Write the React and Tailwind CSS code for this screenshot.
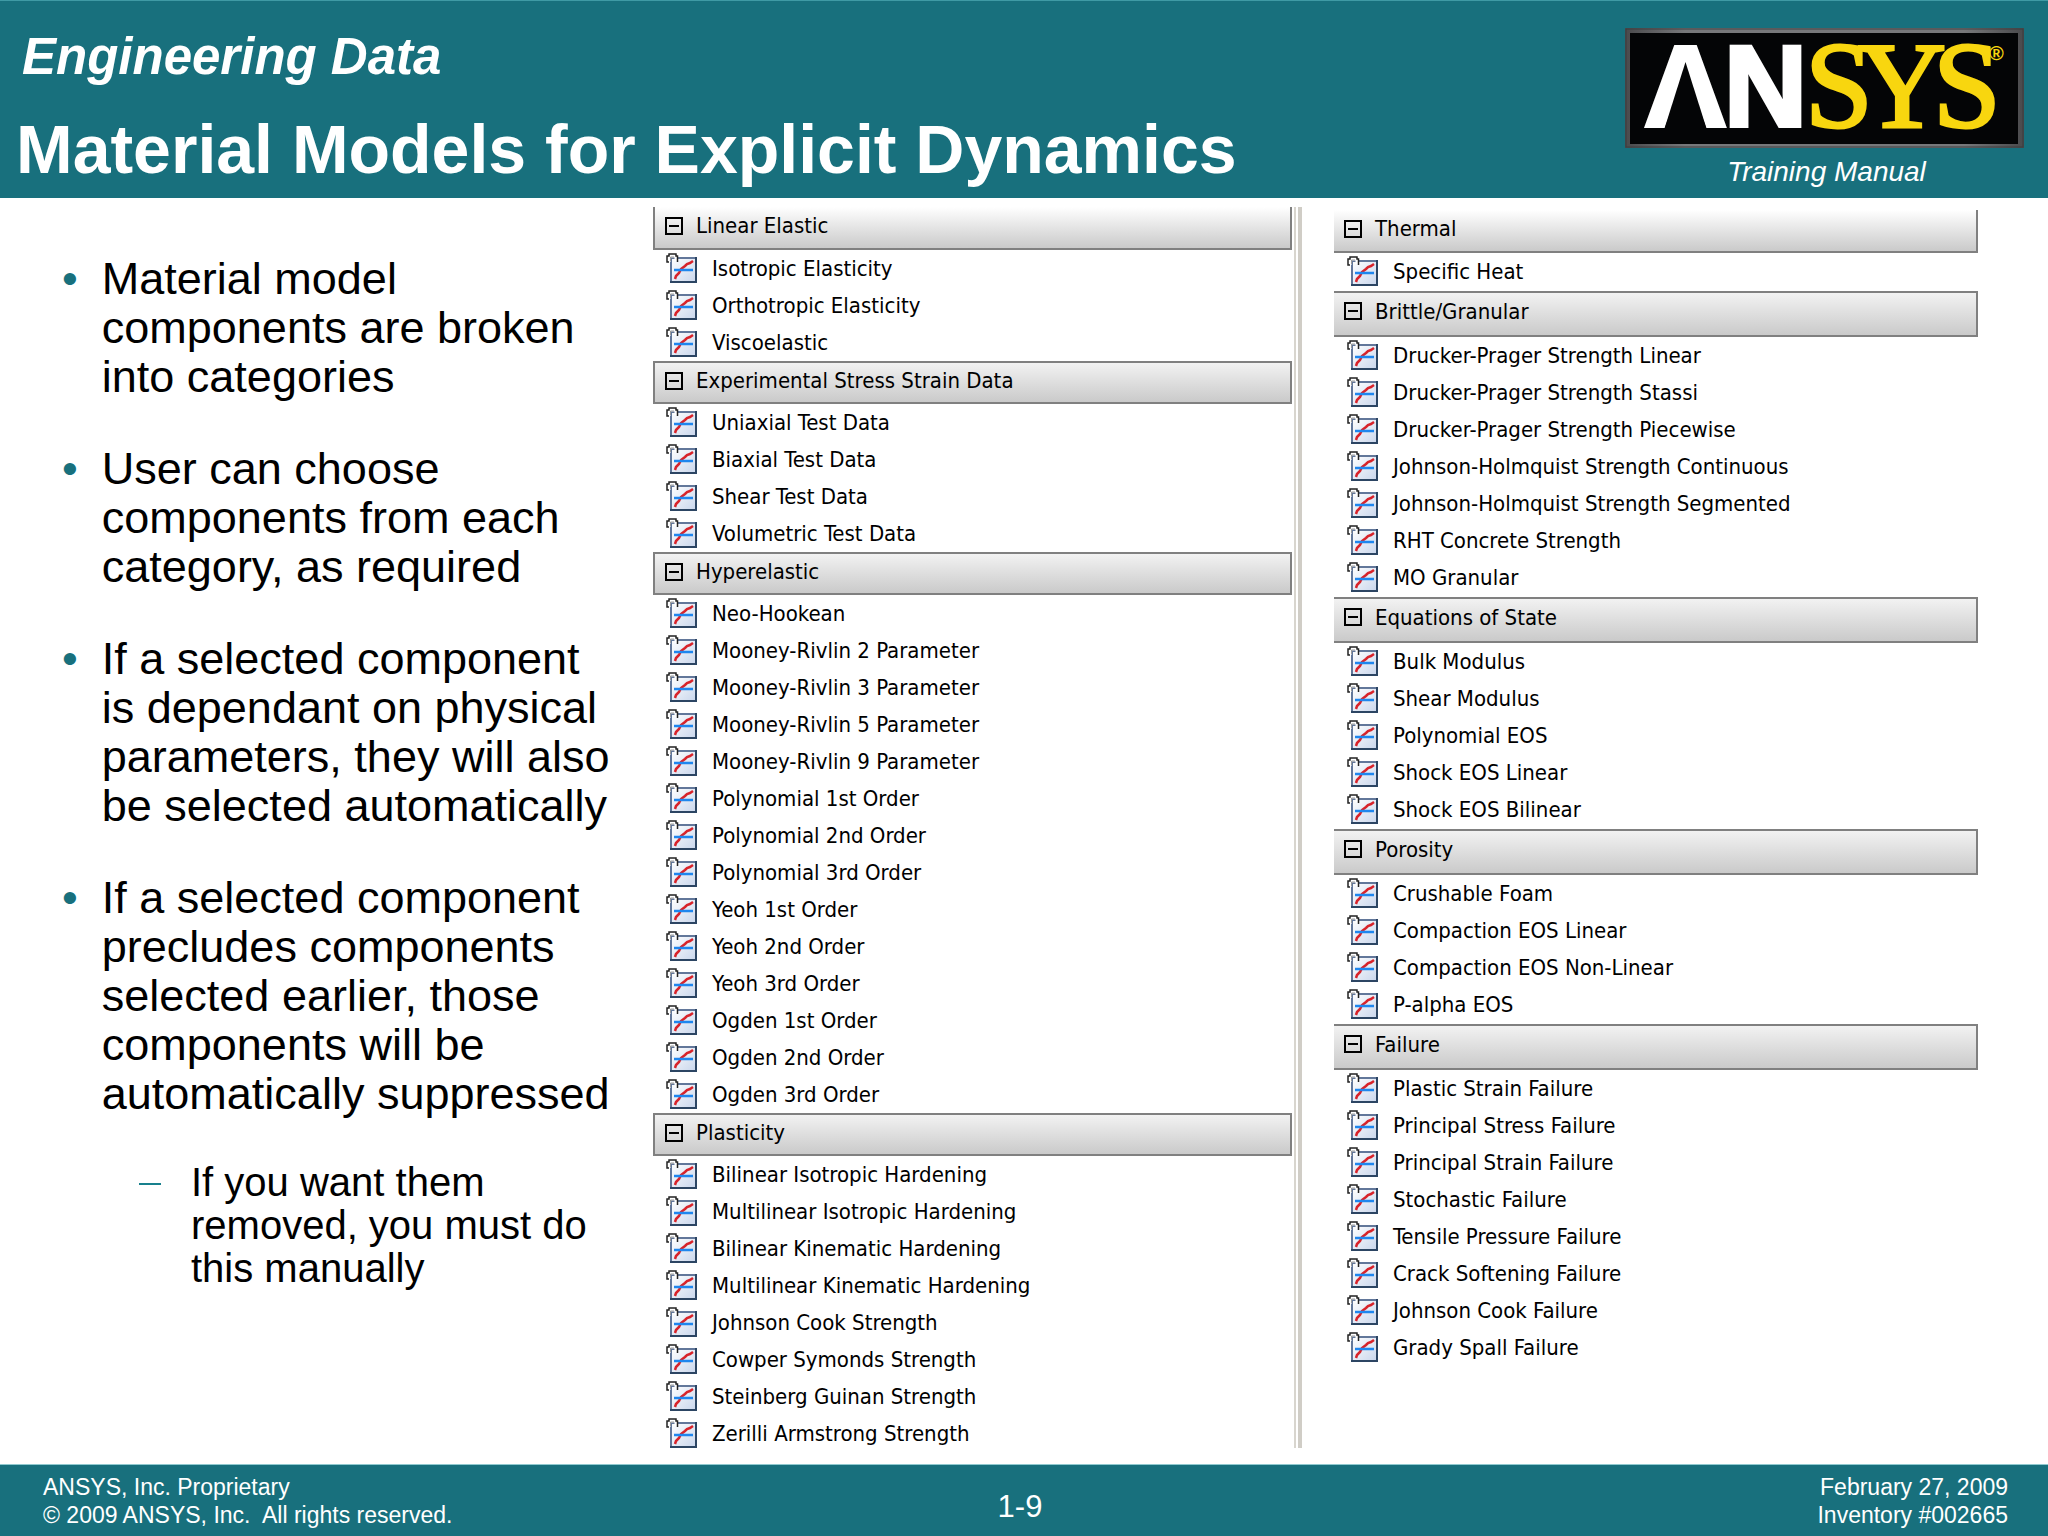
import { useState } from 'react';

const leftGroups = [
    {
        name: 'Linear Elastic',
        items: ['Isotropic Elasticity', 'Orthotropic Elasticity', 'Viscoelastic'],
    },
    {
        name: 'Experimental Stress Strain Data',
        items: ['Uniaxial Test Data', 'Biaxial Test Data', 'Shear Test Data', 'Volumetric Test Data'],
    },
    {
        name: 'Hyperelastic',
        items: [
            'Neo-Hookean',
            'Mooney-Rivlin 2 Parameter',
            'Mooney-Rivlin 3 Parameter',
            'Mooney-Rivlin 5 Parameter',
            'Mooney-Rivlin 9 Parameter',
            'Polynomial 1st Order',
            'Polynomial 2nd Order',
            'Polynomial 3rd Order',
            'Yeoh 1st Order',
            'Yeoh 2nd Order',
            'Yeoh 3rd Order',
            'Ogden 1st Order',
            'Ogden 2nd Order',
            'Ogden 3rd Order',
        ],
    },
    {
        name: 'Plasticity',
        items: [
            'Bilinear Isotropic Hardening',
            'Multilinear Isotropic Hardening',
            'Bilinear Kinematic Hardening',
            'Multilinear Kinematic Hardening',
            'Johnson Cook Strength',
            'Cowper Symonds Strength',
            'Steinberg Guinan Strength',
            'Zerilli Armstrong Strength',
        ],
    },
];

const rightGroups = [
    { name: 'Thermal', items: ['Specific Heat'] },
    {
        name: 'Brittle/Granular',
        items: [
            'Drucker-Prager Strength Linear',
            'Drucker-Prager Strength Stassi',
            'Drucker-Prager Strength Piecewise',
            'Johnson-Holmquist Strength Continuous',
            'Johnson-Holmquist Strength Segmented',
            'RHT Concrete Strength',
            'MO Granular',
        ],
    },
    {
        name: 'Equations of State',
        items: ['Bulk Modulus', 'Shear Modulus', 'Polynomial EOS', 'Shock EOS Linear', 'Shock EOS Bilinear'],
    },
    {
        name: 'Porosity',
        items: ['Crushable Foam', 'Compaction EOS Linear', 'Compaction EOS Non-Linear', 'P-alpha EOS'],
    },
    {
        name: 'Failure',
        items: [
            'Plastic Strain Failure',
            'Principal Stress Failure',
            'Principal Strain Failure',
            'Stochastic Failure',
            'Tensile Pressure Failure',
            'Crack Softening Failure',
            'Johnson Cook Failure',
            'Grady Spall Failure',
        ],
    },
];

const bullets = [
    'Material model components are broken into categories',
    'User can choose components from each category, as required',
    'If a selected component is dependant on physical parameters, they will also be selected automatically',
    'If a selected component precludes components selected earlier, those components will be automatically suppressed',
];

function Logo() {
    return (
        <svg viewBox="0 0 399 120" className="h-[120px] w-[399px] overflow-visible" role="img" aria-label="ANSYS">
            <defs>
                <linearGradient id="frame" x1="0" y1="0" x2="1" y2="0">
                    <stop offset="0" stopColor="#4a4a4c" />
                    <stop offset="0.15" stopColor="#77787a" />
                    <stop offset="0.85" stopColor="#77787a" />
                    <stop offset="1" stopColor="#4a4a4c" />
                </linearGradient>
            </defs>
            <rect width="399" height="120" fill="url(#frame)" />
            <rect x="1" y="1" width="397" height="118" fill="none" stroke="#3c3c3e" strokeWidth="1" />
            <rect x="5" y="5" width="388" height="111" fill="#040506" />
            <text y="98" fill="#fff" stroke="#fff" strokeWidth="4" fontFamily="Liberation Sans" fontWeight="700" fontSize="115">
                <tspan x="19">A</tspan>
                <tspan x="99">N</tspan>
            </text>
            {/* the mark has no crossbar in its first letter */}
            <path d="M60.500 34 L39 102 L82 102 Z" fill="#040506" />
            <text fill="#f8d60f" fontFamily="Liberation Serif">
                <tspan x="180 233 308" y="99" fontSize="122" stroke="#f8d60f" strokeWidth="3">SYS</tspan>
                <tspan x="364" y="32" fontSize="20" fontFamily="Liberation Sans" fontWeight="700">®</tspan>
            </text>
        </svg>
    );
}

function ChartIcon() {
    return (
        <svg viewBox="0 0 31 31" className="h-[31px] w-[31px] shrink-0" aria-hidden="true">
            <defs>
                <linearGradient id="sheet" x1="0" y1="0" x2="1" y2="1">
                    <stop offset="0" stopColor="#ffffff" />
                    <stop offset="1" stopColor="#c9d6ec" />
                </linearGradient>
            </defs>
            <rect x="5" y="5" width="25" height="24" fill="url(#sheet)" />
            <path d="M5 29 V5 H30" fill="none" stroke="#62779a" strokeWidth="2" />
            <path d="M30 4 V29 H4" fill="none" stroke="#2c4563" strokeWidth="2" />
            <path d="M9 26 L10 23 L13 20 L15 16 L19 13 L21 11 L24 10 L27 8" fill="none" stroke="#d8232a" strokeWidth="2.5" />
            <path d="M8 17 H27" stroke="#1f86ee" strokeWidth="2.5" />
            <path d="M3 9 V3 H10 V8" fill="none" stroke="#fff" strokeWidth="3" />
            <path d="M3 9 H1 V3 H3 V1 H10 V3 H11.500 V9" fill="none" stroke="#222" strokeWidth="1.5" />
            <path d="M4.500 8 V4 H8" fill="none" stroke="#999" strokeWidth="1" />
        </svg>
    );
}

function Group({ group, barClass }) {
    const [open, setOpen] = useState(true);

    return (
        <section>
            <h2 className={barClass}>
                <button
                    type="button"
                    aria-expanded={open}
                    onClick={() => setOpen(!open)}
                    className="flex items-center gap-[13px]"
                >
                    <span className="flex h-[18px] w-[18px] items-center justify-center border-2 border-black">
                        <span className="h-[2px] w-[10px] bg-black" />
                    </span>
                    <span>{group.name}</span>
                </button>
            </h2>
            {open && (
                <ul>
                    {group.items.map((item) => (
                        <li key={item} className="flex h-[37px] items-center gap-[15px] pl-[13px]">
                            <ChartIcon />
                            <span>{item}</span>
                        </li>
                    ))}
                </ul>
            )}
        </section>
    );
}

export default function App() {
    return (
        <div className="flex min-h-screen flex-col bg-white font-['Liberation_Sans',sans-serif] text-black">
            <header className="flex items-start justify-between border-t border-[#3f9aa5] bg-[#18707d] pr-6 pb-[9px] text-white">
                <div className="pt-[26px] pl-4">
                    <p className="pl-[6px] text-[51px] leading-[60px] font-bold italic">Engineering Data</p>
                    <h1 className="mt-[22px] text-[68px] leading-[80px] font-bold">
                        Material Models for Explicit Dynamics
                    </h1>
                </div>
                <div className="flex flex-col items-center gap-2 pt-[27px]">
                    <Logo />
                    <p className="pl-1 text-[28px] leading-8 italic">Training Manual</p>
                </div>
            </header>

            <main className="grid flex-1 grid-cols-[653fr_649fr_746fr] items-start">
                <ul className="flex flex-col gap-[43px] pt-14 pr-8 pl-[62px] text-[45px] leading-[49px]">
                    {bullets.map((text) => (
                        <li key={text} className="flex gap-6">
                            <span className="text-[#18707d]">•</span>
                            <span>{text}</span>
                        </li>
                    ))}
                    <li className="flex gap-[30px] pl-[77px] text-[40px] leading-[43px]">
                        <span className="mt-[22px] h-[2px] w-[22px] shrink-0 bg-[#18808d]" />
                        <span>If you want them removed, you must do this manually</span>
                    </li>
                </ul>

                <div className="flex pt-[9px] font-['DejaVu_Sans_Condensed','DejaVu_Sans',sans-serif] text-[22px]">
                    <div className="flex-1">
                        {leftGroups.map((group, i) => (
                            <Group
                                key={group.name}
                                group={group}
                                barClass={
                                    i === 0
                                        ? 'flex h-[43px] items-center border-r-2 border-b-2 border-l-2 border-[#808080] bg-linear-to-b from-white to-[#cacaca] pb-1 pl-[10px]'
                                        : 'flex h-[43px] items-center border-2 border-[#808080] bg-linear-to-b from-[#f2f2f2] to-[#cacaca] pb-1 pl-[10px]'
                                }
                            />
                        ))}
                    </div>
                    <div className="mb-1 ml-[2px] w-[2px] bg-[#d8d5ce]" />
                    <div className="mb-1 ml-[2px] w-1 bg-[#d0cdc6]" />
                </div>

                <div className="flex flex-col gap-px pt-3 pr-[70px] pl-8 font-['DejaVu_Sans_Condensed','DejaVu_Sans',sans-serif] text-[22px]">
                    {rightGroups.map((group, i) => (
                        <Group
                            key={group.name}
                            group={group}
                            barClass={
                                i === 0
                                    ? 'flex h-[43px] items-center border-r-2 border-b-2 border-[#808080] bg-linear-to-b from-white to-[#cacaca] pb-1 pl-[10px]'
                                    : 'flex h-[46px] items-center border-y-2 border-r-2 border-[#808080] bg-linear-to-b from-[#f2f2f2] to-[#cacaca] pb-[6px] pl-[10px]'
                            }
                        />
                    ))}
                </div>
            </main>

            <footer className="grid h-[72px] grid-cols-3 items-center border-t border-[#8fc9cf] bg-[#18707d] text-[23px] leading-7 text-white">
                <p className="pl-[43px] whitespace-pre-line">
                    {'ANSYS, Inc. Proprietary\n© 2009 ANSYS, Inc.\u00a0 All rights reserved.'}
                </p>
                <p className="pt-3 pr-2 text-center text-[31px]">1-9</p>
                <p className="pr-10 text-right">
                    February 27, 2009
                    <br />
                    Inventory #002665
                </p>
            </footer>
        </div>
    );
}
